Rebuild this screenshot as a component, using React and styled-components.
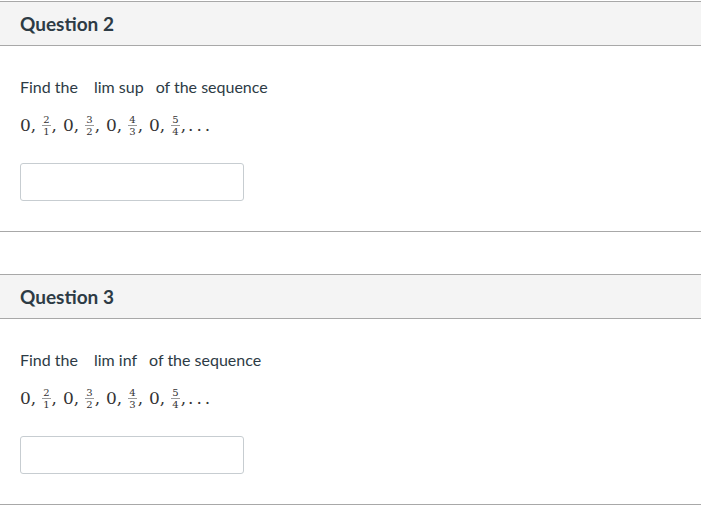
import React from 'react';
import styled, { createGlobalStyle } from 'styled-components';

const Global = createGlobalStyle`
  body {
    margin: 0;
    background: #fff;
    font-family: Lato, "Open Sans", sans-serif;
    color: #2d3b45;
  }
  #root { padding-top: 1px; }
`;

const Card = styled.section`
  border-top: 1px solid #a8a8a8;
  border-bottom: 1px solid #a8a8a8;
  & + & { margin-top: 42px; }
`;

const Header = styled.header`
  height: 43px;
  background: #f4f4f4;
  border-bottom: 1px solid #a8a8a8;
  display: flex;
  align-items: center;
  padding: 0 20px;
  font-size: 19px;
  font-weight: 700;
  color: #2d3b45;
`;

const Body = styled.div`
  padding: 29px 20px 30px;
`;

const Prompt = styled.p`
  margin: 0;
  font-size: 16px;
  line-height: 24px;
  display: flex;
  align-items: center;
`;

const MathWord = styled.span`
  margin: 0 ${p => p.$right}px 0 ${p => p.$left}px;
`;

const MathLine = styled.div`
  margin-top: 11px;
  height: 30px;
  display: flex;
  align-items: center;
  font-family: "DejaVu Serif", "Liberation Serif", serif;
  font-size: 17px;
  color: #333;
`;

const Term = styled.span`
  margin-right: ${p => p.$gap}px;
`;

const Dots = styled.span`
  letter-spacing: 3px;
  margin-left: 2px;
`;

const Frac = styled.span`
  display: inline-flex;
  flex-direction: column;
  align-items: center;
  font-size: 10px;
  line-height: 11px;
  margin: 0 1px;
  & > span:first-child {
    border-bottom: 1px solid #999;
    padding: 0 1px;
  }
`;

const Answer = styled.input`
  display: block;
  margin-top: 23px;
  width: 224px;
  height: 38px;
  box-sizing: border-box;
  border: 1px solid #c7cdd1;
  border-radius: 3px;
  background: #fff;
  outline: none;
`;

const fracs = [[2, 1], [3, 2], [4, 3], [5, 4]];

function Sequence() {
  return (
    <MathLine>
      {fracs.map(([n, d], i) => (
        <React.Fragment key={i}>
          <Term $gap={5}>0,</Term>
          <Frac><span>{n}</span><span>{d}</span></Frac>
          <Term $gap={i < 3 ? 6 : 0}>,</Term>
        </React.Fragment>
      ))}
      <Dots>...</Dots>
    </MathLine>
  );
}

function Question({ num, op }) {
  return (
    <Card>
      <Header>Question {num}</Header>
      <Body>
        <Prompt>
          Find the
          <MathWord $left={16} $right={12}>{op}</MathWord>
          of the sequence
        </Prompt>
        <Sequence />
        <Answer type="text" />
      </Body>
    </Card>
  );
}

export default function App() {
  return (
    <>
      <Global />
      <Question num={2} op="lim sup" />
      <Question num={3} op="lim inf" />
    </>
  );
}
